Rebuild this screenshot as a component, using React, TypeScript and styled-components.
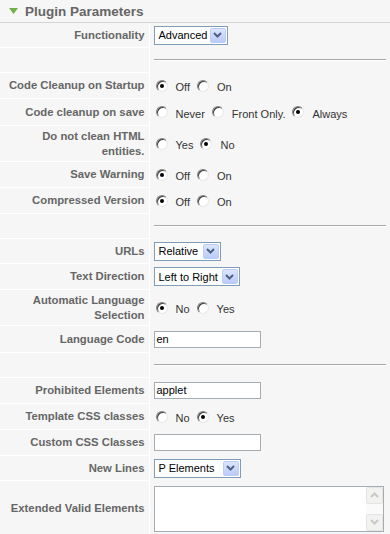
import React from 'react';
import styled, { createGlobalStyle } from 'styled-components';

const GlobalStyle = createGlobalStyle`
  html, body {
    margin: 0;
    padding: 0;
    background: #f6f6f6;
  }
  body {
    font-family: "Liberation Sans", Arial, sans-serif;
    font-size: 11px;
    color: #333;
  }
`;

const Panel = styled.div`
  width: 390px;
  height: 534px;
  overflow: hidden;
  background: #f6f6f6;
`;

const Header = styled.div`
  height: 22px;
  display: flex;
  align-items: center;
  gap: 7px;
  padding-left: 9px;
  border-bottom: 1px solid #d4d4d4;
  font-size: 13.5px;
  font-weight: bold;
  color: #666;
`;

const Table = styled.table`
  width: 100%;
  table-layout: fixed;
  border-collapse: collapse;
  border-spacing: 0;
`;

const LabelCol = styled.col`
  width: 149px;
`;

const Label = styled.td<{ $h: number }>`
  height: ${(p) => p.$h}px;
  padding: 0 4px 0 2px;
  text-align: right;
  font-size: 11.3px;
  font-weight: bold;
  color: #666;
  line-height: 15px;
  border-right: 1px solid #fff;
  border-bottom: 1px solid #fff;
  vertical-align: middle;
`;

const Value = styled.td`
  padding: 0 0 0 4px;
  vertical-align: middle;
`;

const Rule = styled.div`
  width: 232px;
  border-top: 1px solid #a8a8a8;
  border-bottom: 1px solid #fff;
`;

const SelectBox = styled.div<{ $w: number }>`
  width: ${(p) => p.$w}px;
  height: 19px;
  box-sizing: border-box;
  border: 1px solid #7f9db9;
  background: #fff;
  display: flex;
  align-items: center;
  justify-content: space-between;
  padding: 0 1px 0 4px;
  color: #000;
`;

const DropButton = styled.div`
  width: 16px;
  height: 15px;
  box-sizing: border-box;
  border: 1px solid #bccdf5;
  border-radius: 2px;
  background: linear-gradient(#dbe5fd, #bacbf7);
  display: flex;
  align-items: center;
  justify-content: center;
`;

const TextInput = styled.div`
  width: 107px;
  height: 17px;
  box-sizing: border-box;
  border: 1px solid #a5acb2;
  background: #fff;
  padding: 0 2px;
  line-height: 15px;
  color: #000;
`;

const RadioGroup = styled.div`
  display: flex;
  align-items: center;
  gap: 7px;
  padding-left: 2px;
`;

const Option = styled.label`
  display: flex;
  align-items: center;
  gap: 8px;
`;

const OptionText = styled.span`
  padding-top: 3px;
  color: #333;
`;

const RadioDot = styled.span<{ $on: boolean }>`
  width: 12px;
  height: 12px;
  box-sizing: border-box;
  border-radius: 50%;
  border: 1px solid;
  border-color: #808080 #e8e8e8 #e8e8e8 #808080;
  box-shadow: inset 1px 1px 0 #404040;
  background: #fff;
  display: flex;
  align-items: center;
  justify-content: center;
  &::after {
    content: '';
    width: 4px;
    height: 4px;
    border-radius: 50%;
    background: ${(p) => (p.$on ? '#000' : 'transparent')};
  }
`;

const AreaBox = styled.div`
  width: 230px;
  height: 46px;
  box-sizing: border-box;
  border: 1px solid #a5acb2;
  background: #fff;
  display: flex;
`;

const Area = styled.textarea`
  flex: 1;
  border: none;
  resize: none;
  outline: none;
  padding: 2px;
  font-family: inherit;
  font-size: 11px;
`;

const Scroll = styled.div`
  width: 17px;
  background: #fafafa;
  display: flex;
  flex-direction: column;
  justify-content: space-between;
`;

const ScrollBtn = styled.div`
  height: 17px;
  box-sizing: border-box;
  border: 1px solid #e4e4e4;
  border-radius: 2px;
  background: #f2f2f0;
  display: flex;
  align-items: center;
  justify-content: center;
`;

const Chevron = ({ up, color }: { up?: boolean; color: string }) => (
  <svg width="9" height="6" viewBox="0 0 9 6">
    <path
      d={up ? 'M1 5 L4.5 1.5 L8 5' : 'M1 1 L4.5 4.5 L8 1'}
      fill="none"
      stroke={color}
      strokeWidth="2"
    />
  </svg>
);

const Select = ({ value, width }: { value: string; width: number }) => (
  <SelectBox $w={width}>
    <span>{value}</span>
    <DropButton>
      <Chevron color="#4d6185" />
    </DropButton>
  </SelectBox>
);

const Radios = ({ options, checked }: { options: string[]; checked: string }) => (
  <RadioGroup>
    {options.map((o) => (
      <Option key={o}>
        <RadioDot $on={o === checked} />
        <OptionText>{o}</OptionText>
      </Option>
    ))}
  </RadioGroup>
);

type Row = { label?: string; h: number; control?: React.ReactNode };

const rows: Row[] = [
  { label: 'Functionality', h: 24, control: <Select value="Advanced" width={74} /> },
  { h: 24, control: <Rule /> },
  { label: 'Code Cleanup on Startup', h: 25, control: <Radios options={['Off', 'On']} checked="Off" /> },
  {
    label: 'Code cleanup on save',
    h: 26,
    control: <Radios options={['Never', 'Front Only.', 'Always']} checked="Always" />,
  },
  { label: 'Do not clean HTML entities.', h: 35, control: <Radios options={['Yes', 'No']} checked="No" /> },
  { label: 'Save Warning', h: 25, control: <Radios options={['Off', 'On']} checked="Off" /> },
  { label: 'Compressed Version', h: 25, control: <Radios options={['Off', 'On']} checked="Off" /> },
  { h: 24, control: <Rule /> },
  { label: 'URLs', h: 24, control: <Select value="Relative" width={67} /> },
  { label: 'Text Direction', h: 25, control: <Select value="Left to Right" width={86} /> },
  {
    label: 'Automatic Language Selection',
    h: 35,
    control: <Radios options={['No', 'Yes']} checked="No" />,
  },
  { label: 'Language Code', h: 26, control: <TextInput>en</TextInput> },
  { h: 24, control: <Rule /> },
  { label: 'Prohibited Elements', h: 25, control: <TextInput>applet</TextInput> },
  { label: 'Template CSS classes', h: 25, control: <Radios options={['No', 'Yes']} checked="Yes" /> },
  { label: 'Custom CSS Classes', h: 25, control: <TextInput /> },
  { label: 'New Lines', h: 24, control: <Select value="P Elements" width={87} /> },
  {
    label: 'Extended Valid Elements',
    h: 55,
    control: (
      <AreaBox>
        <Area />
        <Scroll>
          <ScrollBtn>
            <Chevron up color="#c8c8c8" />
          </ScrollBtn>
          <ScrollBtn>
            <Chevron color="#c8c8c8" />
          </ScrollBtn>
        </Scroll>
      </AreaBox>
    ),
  },
];

export default function App() {
  return (
    <Panel>
      <GlobalStyle />
      <Header>
        <svg width="9" height="6" viewBox="0 0 9 6">
          <path d="M0 0 H9 L4.5 6 Z" fill="#6fb04a" />
        </svg>
        Plugin Parameters
      </Header>
      <Table>
        <colgroup>
          <LabelCol />
          <col />
        </colgroup>
        <tbody>
          {rows.map((r, i) => (
            <tr key={i}>
              <Label $h={r.h}>{r.label}</Label>
              <Value>{r.control}</Value>
            </tr>
          ))}
        </tbody>
      </Table>
    </Panel>
  );
}
